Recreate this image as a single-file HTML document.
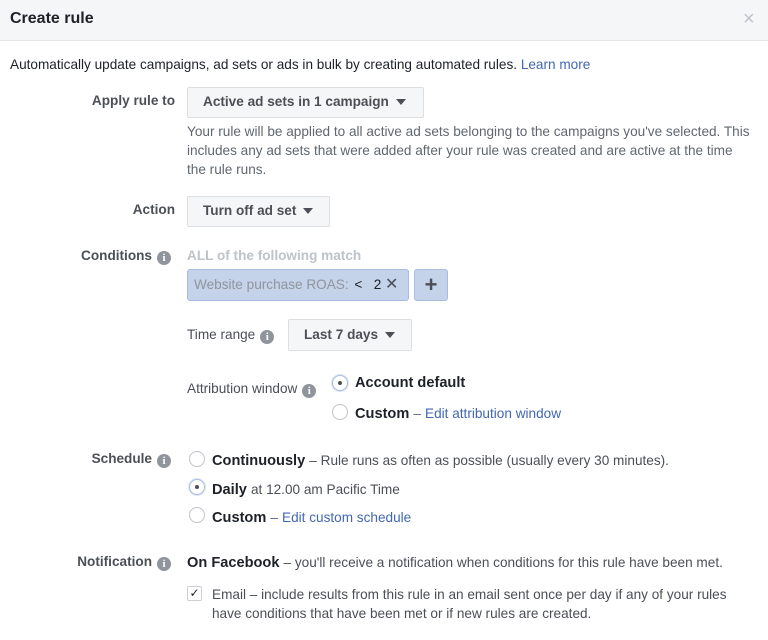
<!DOCTYPE html>
<html><head><meta charset="utf-8"><style>
body{margin:0;width:768px;height:640px;background:#fff;font-family:"Liberation Sans",Arial,sans-serif;color:#1d2129;position:relative;overflow:hidden}
.a{position:absolute;white-space:nowrap}
.hd{position:absolute;left:0;top:0;width:768px;height:40px;background:#f5f6f7;border-bottom:1px solid #e5e5e5}
.lbl{position:absolute;right:593px;font-size:13.6px;font-weight:bold;color:#4b4f56;white-space:nowrap;line-height:16px}
.btn{position:absolute;background:#f5f6f7;border:1px solid #dddfe2;border-radius:2px;font-size:13.6px;font-weight:bold;color:#4b4f56;box-sizing:border-box;padding-left:15px;line-height:28px;white-space:nowrap}
.tri{display:inline-block;width:0;height:0;border-left:5px solid transparent;border-right:5px solid transparent;border-top:6px solid #4b4f56;margin-left:7px;vertical-align:1px}
.i{display:inline-block;width:14px;height:14px;border-radius:50%;background:#90949c;color:#fff;font-size:11px;font-weight:bold;text-align:center;line-height:14px;vertical-align:-1px;margin-left:5px;font-family:"Liberation Serif",serif}
.t{font-size:13.6px;color:#606770;line-height:19px}
.r{position:absolute;width:16px;height:16px;border-radius:50%;border:1px solid #bec3c9;box-sizing:border-box;background:#fff}
.r.on{border-color:#a8bde0;box-shadow:0 0 0 1px #dfe7f5}
.r.on::after{content:"";position:absolute;left:5px;top:5px;width:4px;height:4px;border-radius:50%;background:#4b4f56}
.lk{color:#4267b2}
b{color:#1d2129}
</style></head><body>
<div class="hd"></div>
<div class="a" style="left:10px;top:10px;font-size:16px;font-weight:bold;color:#1d2129">Create rule</div>
<div class="a" style="left:743px;top:8px;font-size:20px;color:#bec3c9">×</div>
<div class="a t" style="left:10px;top:55px;color:#1d2129">Automatically update campaigns, ad sets or ads in bulk by creating automated rules. <span class="lk">Learn more</span></div>

<div class="lbl" style="top:93px">Apply rule to</div>
<div class="btn" style="left:187px;top:87px;width:237px;height:31px">Active ad sets in 1 campaign<span class="tri"></span></div>
<div class="a t" style="left:187px;top:122px">Your rule will be applied to all active ad sets belonging to the campaigns you've selected. This<br>includes any ad sets that were added after your rule was created and are active at the time<br>the rule runs.</div>

<div class="lbl" style="top:202px">Action</div>
<div class="btn" style="left:187px;top:196px;width:143px;height:31px">Turn off ad set<span class="tri"></span></div>

<div class="lbl" style="top:248px;right:597px">Conditions<span class="i">i</span></div>
<div class="a" style="left:187px;top:248px;font-size:13.6px;font-weight:bold;color:#bec3c9">ALL of the following match</div>
<div class="a" style="left:187px;top:269px;width:222px;height:32px;background:#c4d2ea;border:1px solid #a8bde0;border-radius:3px;box-sizing:border-box;font-size:13.6px;line-height:30px;padding-left:6px;color:#90949c">Website purchase ROAS: <span style="color:#1d2129;margin-left:2px">&lt;&nbsp;&nbsp;&nbsp;2</span> <span style="color:#4b4f56;font-size:16px">✕</span></div>
<div class="a" style="left:414px;top:269px;width:34px;height:32px;background:#c4d2ea;border:1px solid #a8bde0;border-radius:3px;box-sizing:border-box;text-align:center;font-size:22px;font-weight:bold;line-height:29px;color:#4b4f56">+</div>

<div class="a t" style="left:187px;top:325px;color:#4b4f56">Time range<span class="i">i</span></div>
<div class="btn" style="left:288px;top:319px;width:124px;height:32px;line-height:30px">Last 7 days<span class="tri"></span></div>

<div class="a t" style="left:187px;top:379px;color:#4b4f56">Attribution window<span class="i">i</span></div>
<div class="r on" style="left:332px;top:375px"></div>
<div class="a" style="left:355px;top:375px;font-size:14.6px;font-weight:bold">Account default</div>
<div class="r" style="left:332px;top:404px"></div>
<div class="a" style="left:355px;top:404px;font-size:14.6px"><b>Custom</b> <span class="t">–</span> <span class="lk" style="font-size:13.6px">Edit attribution window</span></div>

<div class="lbl" style="top:451px;right:597px">Schedule<span class="i">i</span></div>
<div class="r" style="left:189px;top:451px"></div>
<div class="a" style="left:212px;top:451px;font-size:14.6px"><b>Continuously</b> <span class="t" style="color:#4b4f56">– Rule runs as often as possible (usually every 30 minutes).</span></div>
<div class="r on" style="left:189px;top:479px"></div>
<div class="a" style="left:212px;top:480px;font-size:14.6px"><b>Daily</b> <span class="t" style="color:#4b4f56">at 12.00 am Pacific Time</span></div>
<div class="r" style="left:189px;top:507px"></div>
<div class="a" style="left:212px;top:508px;font-size:14.6px"><b>Custom</b> <span class="t">–</span> <span class="lk" style="font-size:13.6px">Edit custom schedule</span></div>

<div class="lbl" style="top:554px;right:597px">Notification<span class="i">i</span></div>
<div class="a" style="left:187px;top:553px;font-size:14.6px"><b>On Facebook</b> <span class="t" style="color:#4b4f56">– you'll receive a notification when conditions for this rule have been met.</span></div>
<div class="a" style="left:187px;top:586px;width:15px;height:15px;border:1px solid #ccd0d5;border-radius:2px;box-sizing:border-box;font-size:12px;line-height:13px;text-align:center;color:#1d2129">✓</div>
<div class="a t" style="left:212px;top:585px;color:#4b4f56">Email – include results from this rule in an email sent once per day if any of your rules<br>have conditions that have been met or if new rules are created.</div>
</body></html>
